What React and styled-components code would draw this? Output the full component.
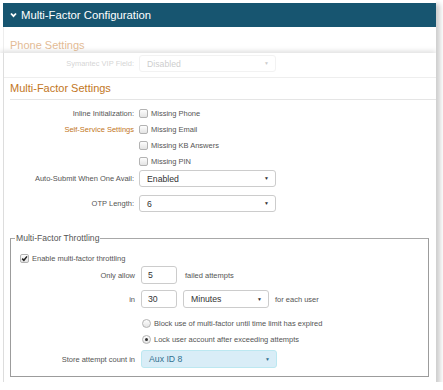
import React from "react";
import styled, { createGlobalStyle } from "styled-components";

const GlobalStyle = createGlobalStyle`
  html, body {
    margin: 0;
    padding: 0;
    background: #fff;
  }
  body {
    font-family: "Liberation Sans", Arial, sans-serif;
  }
`;

const Frame = styled.div`
  width: 436px;
  height: 382px;
  box-sizing: border-box;
  padding-top: 3px;
  background: #fff;
  overflow: hidden;
  box-shadow: 4px 4px 5px rgba(0, 0, 0, 0.2);
`;

const Header = styled.div`
  margin-left: 3px;
  height: 24px;
  display: flex;
  align-items: center;
  gap: 4px;
  padding-left: 7px;
  background: #175570;
  color: #fff;
  font-size: 11.3px;
`;

const Ghost = styled.div`
  height: 26px;
  box-sizing: border-box;
  margin-left: 3px;
  border-left: 1px solid #ddd;
  padding: 11px 0 0 6px;
  font-size: 11px;
  line-height: 14px;
  color: #c8782a;
  opacity: 0.5;
`;

const Card = styled.div`
  height: 329px;
  box-sizing: border-box;
  padding-left: 3px;
  background: #fff;
  box-shadow: 0 -2px 5px rgba(0, 0, 0, 0.13);
`;

const CardBody = styled.div`
  height: 100%;
  box-sizing: border-box;
  border-left: 1px solid #ddd;
  padding-top: 2px;
`;

const Row = styled.div`
  display: grid;
  grid-template-columns: ${(p) => p.$label ?? 130}px 1fr;
  column-gap: ${(p) => p.$gap ?? 5}px;
  align-items: center;
  height: ${(p) => p.$h || 16}px;
  margin-top: ${(p) => p.$mt || 0}px;
  opacity: ${(p) => (p.$faded ? 0.25 : 1)};
`;

const Label = styled.span`
  text-align: right;
  font-size: 7.5px;
  color: ${(p) => (p.$accent ? "#c27624" : "#555")};
  white-space: nowrap;
`;

const Divider = styled.div`
  margin-top: 5px;
  height: 1px;
  background: #eee;
`;

const Heading = styled.div`
  margin: 3px 0 0 6px;
  padding-bottom: 4px;
  border-bottom: 1px solid #e5e5e5;
  font-size: 11px;
  line-height: 14px;
  color: #c27624;
`;

const Select = styled.div`
  width: ${(p) => p.$w || 137}px;
  height: ${(p) => p.$h || 17}px;
  box-sizing: border-box;
  display: flex;
  align-items: center;
  justify-content: space-between;
  padding: 0 6px 0 7px;
  border: 1px solid ${(p) => (p.$info ? "#bce8f1" : "#ccc")};
  border-radius: 3px;
  background: ${(p) => (p.$info ? "#d9edf7" : "#fff")};
  color: ${(p) => (p.$info ? "#31708f" : "#333")};
  font-size: 8.7px;
`;

const Caret = styled.span`
  font-size: 5px;
  line-height: 1;
`;

const TextBox = styled.div`
  width: 36px;
  height: 18px;
  box-sizing: border-box;
  display: flex;
  align-items: center;
  padding-left: 6px;
  border: 1px solid #ccc;
  border-radius: 3px;
  color: #333;
  font-size: 8.7px;
`;

const Inline = styled.div`
  display: flex;
  align-items: center;
  gap: ${(p) => p.$gap || 6}px;
`;

const Note = styled.span`
  font-size: 7.5px;
  color: #555;
  margin-left: ${(p) => p.$ml || 0}px;
`;

const Check = styled.span`
  width: 9px;
  height: 9px;
  box-sizing: border-box;
  display: inline-flex;
  align-items: center;
  justify-content: center;
  border: 1px solid #b3b3b3;
  border-radius: ${(p) => (p.$round ? "50%" : "2px")};
  background: linear-gradient(#fdfdfd, #e4e4e4);
  flex-shrink: 0;
`;

const Dot = styled.span`
  width: 3px;
  height: 3px;
  border-radius: 50%;
  background: #333;
`;

const Option = styled.label`
  display: flex;
  align-items: center;
  gap: 3px;
  font-size: 7.5px;
  color: #555;
`;

const Fieldset = styled.fieldset`
  margin: 20px 7px 0 6px;
  padding: 0 4px 8px;
  border: 1px solid #9c9c9c;
  border-top-color: #a8a8a8;
`;

const Legend = styled.legend`
  padding: 0 1px;
  font-size: 8.6px;
  line-height: 12px;
  color: #555;
`;

const FieldBody = styled.div`
  padding-left: 5px;
`;

function Chevron() {
  return (
    <svg width="7" height="6" viewBox="0 0 7 6">
      <polyline points="1,1.5 3.5,4.2 6,1.5" fill="none" stroke="#fff" strokeWidth="1.8" />
    </svg>
  );
}

function Box({ checked, round }) {
  return (
    <Check $round={round}>
      {checked && !round && (
        <svg width="7" height="7" viewBox="0 0 7 7">
          <polyline points="1.2,3.6 2.9,5.3 6,1.4" fill="none" stroke="#222" strokeWidth="1.5" />
        </svg>
      )}
      {checked && round && <Dot />}
    </Check>
  );
}

function Dropdown({ value, w, h, info }) {
  return (
    <Select $w={w} $h={h} $info={info}>
      <span>{value}</span>
      <Caret>▼</Caret>
    </Select>
  );
}

const missing = ["Missing Phone", "Missing Email", "Missing KB Answers", "Missing PIN"];
const sideLabels = [
  { text: "Inline Initialization:" },
  { text: "Self-Service Settings", accent: true },
  {},
  {},
];

export default function App() {
  return (
    <>
      <GlobalStyle />
      <Frame>
        <Header>
          <Chevron />
          <span>Multi-Factor Configuration</span>
        </Header>
        <Ghost>Phone Settings</Ghost>
        <Card>
          <CardBody>
            <Row $h={17} $faded>
              <Label>Symantec VIP Field:</Label>
              <Dropdown value="Disabled" />
            </Row>
            <Divider />
            <Heading>Multi-Factor Settings</Heading>

            {missing.map((m, i) => (
              <Row key={m} $mt={i === 0 ? 5 : 0}>
                <Label $accent={sideLabels[i].accent}>{sideLabels[i].text}</Label>
                <Option>
                  <Box />
                  {m}
                </Option>
              </Row>
            ))}

            <Row $h={17} $mt={1}>
              <Label>Auto-Submit When One Avail:</Label>
              <Dropdown value="Enabled" />
            </Row>
            <Row $h={17} $mt={8}>
              <Label>OTP Length:</Label>
              <Dropdown value="6" />
            </Row>

            <Fieldset>
              <Legend>Multi-Factor Throttling</Legend>
              <FieldBody>
                <Row $label={0} $gap={0} $h={14} $mt={7}>
                  <span />
                  <Option>
                    <Box checked />
                    Enable multi-factor throttling
                  </Option>
                </Row>
                <Row $label={115} $gap={6} $h={18} $mt={1}>
                  <Label>Only allow</Label>
                  <Inline>
                    <TextBox>5</TextBox>
                    <Note $ml={2}>failed attempts</Note>
                  </Inline>
                </Row>
                <Row $label={115} $gap={6} $h={18} $mt={6}>
                  <Label>in</Label>
                  <Inline>
                    <TextBox>30</TextBox>
                    <Dropdown value="Minutes" w={86} h={18} />
                    <Note>for each user</Note>
                  </Inline>
                </Row>
                <Row $label={115} $gap={7} $mt={7}>
                  <span />
                  <Option>
                    <Box round />
                    Block use of multi-factor until time limit has expired
                  </Option>
                </Row>
                <Row $label={115} $gap={7}>
                  <span />
                  <Option>
                    <Box round checked />
                    Lock user account after exceeding attempts
                  </Option>
                </Row>
                <Row $label={115} $gap={6} $h={18} $mt={3}>
                  <Label>Store attempt count in</Label>
                  <Dropdown value="Aux ID 8" w={136} h={18} info />
                </Row>
              </FieldBody>
            </Fieldset>
          </CardBody>
        </Card>
      </Frame>
    </>
  );
}
